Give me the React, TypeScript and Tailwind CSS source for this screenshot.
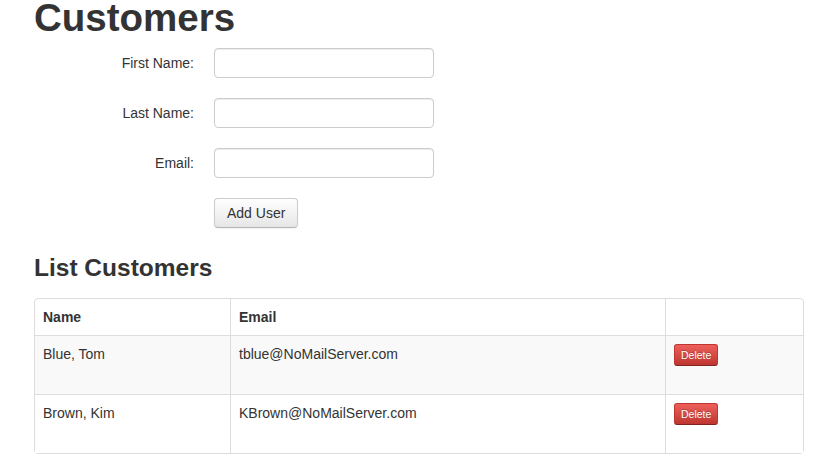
import { useState } from "react";

type Customer = {
  first: string;
  last: string;
  email: string;
};

const initial: Customer[] = [
  { first: "Tom", last: "Blue", email: "tblue@NoMailServer.com" },
  { first: "Kim", last: "Brown", email: "KBrown@NoMailServer.com" },
];

const fields = [
  { key: "first", label: "First Name:" },
  { key: "last", label: "Last Name:" },
  { key: "email", label: "Email:" },
] as const;

export default function App() {
  const [customers, setCustomers] = useState<Customer[]>(initial);
  const [form, setForm] = useState<Customer>({ first: "", last: "", email: "" });

  const addUser = (e: React.FormEvent) => {
    e.preventDefault();
    if (!form.first && !form.last) return;
    setCustomers([...customers, form]);
    setForm({ first: "", last: "", email: "" });
  };

  return (
    <div className="min-h-screen bg-white pl-[34px] font-['Liberation_Sans',Arial,sans-serif] text-[14px] leading-[20px] text-[#333]">
      <h1 className="mt-[-2px] mb-[10px] text-[38.5px] font-bold leading-[40px] text-[#333]">Customers</h1>

      {/* ADD FORM */}
      <form onSubmit={addUser} className="flex flex-col gap-[20px]">
        {fields.map((f) => (
          <div key={f.key} className="flex items-start">
            <label className="w-[160px] pt-[5px] text-right">{f.label}</label>
            <input
              type="text"
              value={form[f.key]}
              onChange={(e) => setForm({ ...form, [f.key]: e.target.value })}
              className="ml-[20px] h-[30px] w-[220px] rounded-[4px] border border-[#ccc] bg-white px-[6px] text-[14px] shadow-[inset_0_1px_1px_rgba(0,0,0,0.075)] outline-none focus:border-[#52a8ec]"
            />
          </div>
        ))}
        <div className="pl-[180px]">
          <button
            type="submit"
            className="h-[30px] rounded-[4px] border border-[#ccc] border-b-[#b3b3b3] bg-gradient-to-b from-white to-[#e6e6e6] px-[12px] text-[14px] leading-[20px] text-[#333] shadow-[inset_0_1px_0_rgba(255,255,255,0.2),0_1px_2px_rgba(0,0,0,0.05)]"
          >
            Add User
          </button>
        </div>
      </form>

      <h2 className="mt-[20px] mb-[10px] text-[24.5px] font-bold leading-[40px] text-[#333]">List Customers</h2>

      {/* CUSTOMER TABLE */}
      <table className="w-[770px] table-fixed border-separate border-spacing-0 rounded-[4px] border border-[#ddd]">
        <thead>
          <tr>
            <th className="w-[195px] p-[8px] text-left align-bottom font-bold">Name</th>
            <th className="w-[435px] border-l border-[#ddd] p-[8px] text-left align-bottom font-bold">Email</th>
            <th className="border-l border-[#ddd] p-[8px]"></th>
          </tr>
        </thead>
        <tbody>
          {customers.map((c, i) => (
            <tr key={i} className={i % 2 === 0 ? "bg-[#f9f9f9]" : "bg-white"}>
              <td className="border-t border-[#ddd] p-[8px] align-top">
                {c.last}, {c.first}
              </td>
              <td className="border-t border-l border-[#ddd] p-[8px] align-top">{c.email}</td>
              <td className="border-t border-l border-[#ddd] p-[8px] align-top">
                <form
                  className="mb-[20px]"
                  onSubmit={(e) => {
                    e.preventDefault();
                    setCustomers(customers.filter((_, j) => j !== i));
                  }}
                >
                  <button
                    type="submit"
                    className="block h-[22px] rounded-[3px] border border-[#bd362f] border-b-[#802420] bg-gradient-to-b from-[#ee5f5b] to-[#bd362f] px-[6px] text-[10.5px] leading-[20px] text-white [text-shadow:0_-1px_0_rgba(0,0,0,0.25)]"
                  >
                    Delete
                  </button>
                </form>
              </td>
            </tr>
          ))}
        </tbody>
      </table>
    </div>
  );
}
